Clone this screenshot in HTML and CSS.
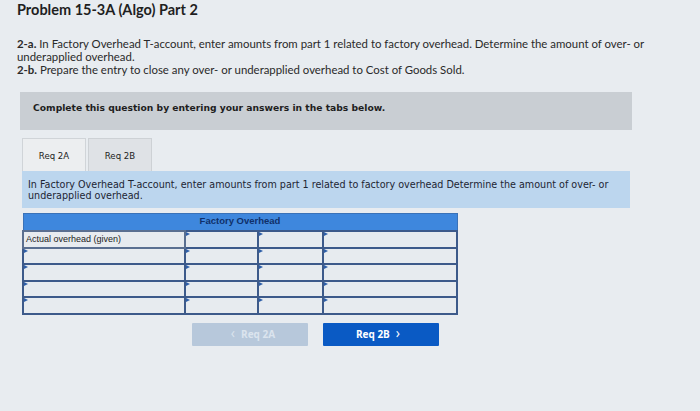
FILE: index.html
```html
<!DOCTYPE html>
<html>
<head>
<meta charset="utf-8">
<link rel="stylesheet" href="styles.css">
</head>
<body>
<div class="page">
  <h1 class="title">Problem 15-3A (Algo) Part 2</h1>
  <div class="intro">
    <p><b>2-a.</b> In Factory Overhead T-account, enter amounts from part 1 related to factory overhead. Determine the amount of over- or underapplied overhead.</p>
    <p><b>2-b.</b> Prepare the entry to close any over- or underapplied overhead to Cost of Goods Sold.</p>
  </div>
  <div class="notice">Complete this question by entering your answers in the tabs below.</div>
  <div class="tabs">
    <div class="tab active">Req 2A</div>
    <div class="tab">Req 2B</div>
  </div>
  <div class="info">In Factory Overhead T-account, enter amounts from part 1 related to factory overhead Determine the amount of over- or underapplied overhead.</div>
  <table class="tacct">
    <thead>
      <tr><th colspan="4">Factory Overhead</th></tr>
    </thead>
    <tbody>
      <tr><td class="c1 lbl">Actual overhead (given)</td><td class="c2 in"></td><td class="c3 in"></td><td class="c4 in"></td></tr>
      <tr><td class="c1 in"></td><td class="c2 in"></td><td class="c3 in"></td><td class="c4 in"></td></tr>
      <tr><td class="c1 in"></td><td class="c2 in"></td><td class="c3 in"></td><td class="c4 in"></td></tr>
      <tr><td class="c1 in"></td><td class="c2 in"></td><td class="c3 in"></td><td class="c4 in"></td></tr>
      <tr><td class="c1 in"></td><td class="c2 in"></td><td class="c3 in"></td><td class="c4 in"></td></tr>
    </tbody>
  </table>
  <div class="nav">
    <div class="btn prev"><span class="chev">&lsaquo;</span> Req 2A</div>
    <div class="btn next">Req 2B <span class="chev">&rsaquo;</span></div>
  </div>
</div>
</body>
</html>
```
FILE: styles.css
```css
html, body {
  margin: 0;
  padding: 0;
  background: #e8ecf0;
}
.page {
  width: 700px;
  height: 411px;
  padding: 0 0 0 17px;
  box-sizing: border-box;
  font-family: "Lato", "Open Sans", sans-serif;
  color: #222;
}
.title {
  margin: 0;
  padding-top: 0;
  font-family: "Lato", sans-serif;
  font-size: 14.5px;
  font-weight: 700;
  line-height: 20px;
  color: #1f1f1f;
}
.intro {
  margin-top: 17px;
  width: 650px;
  font-size: 11.4px;
  line-height: 13px;
  color: #2a2a2a;
}
.intro p { margin: 0; }
.intro b { font-weight: 700; }
.notice {
  margin-top: 16px;
  margin-left: 3px;
  width: 612px;
  height: 38px;
  box-sizing: border-box;
  padding: 10px 0 0 13px;
  background: #c9ced3;
  font-family: "DejaVu Sans", Verdana, sans-serif;
  font-weight: 700;
  font-size: 9.2px;
  color: #1e1e1e;
}
.tabs {
  display: flex;
  margin-top: 8px;
  margin-left: 5px;
  gap: 2px;
}
.tab {
  width: 64px;
  height: 33px;
  box-sizing: border-box;
  border: 1px solid #cdd1d5;
  border-bottom: none;
  background: #dfe2e6;
  font-family: "DejaVu Sans", Verdana, sans-serif;
  font-size: 8.6px;
  color: #222;
  display: flex;
  align-items: center;
  justify-content: center;
  padding-top: 2px;
}
.tab.active {
  background: #eceef0;
  border-color: #d0d4d8;
}
.info {
  margin-left: 5px;
  width: 608px;
  height: 37px;
  box-sizing: border-box;
  padding: 8px 0 0 6px;
  background: #bcd6ee;
  font-family: "DejaVu Sans", Verdana, sans-serif;
  font-size: 9.6px;
  line-height: 11px;
  color: #1c2533;
}
.tacct {
  margin-top: 5px;
  margin-left: 5px;
  width: 436px;
  border-collapse: collapse;
  font-family: "Liberation Sans", Arial, sans-serif;
}
.tacct th {
  height: 16px;
  padding: 0;
  background: #3e87dd;
  border: 1px solid #3a72b8;
  font-size: 9.5px;
  font-weight: 700;
  color: #10306a;
  text-align: center;
  vertical-align: top;
  line-height: 14px;
}
.tacct td {
  height: 14.5px;
  padding: 0;
  border: 2px solid #3d5a8a;
  background: #e7ebef;
  position: relative;
  line-height: 12px;
}
.tacct td.lbl {
  font-size: 9px;
  color: #222;
  padding-left: 2px;
  border-color: #5a6f90;
}
.tacct td.c1 { width: 160px; }
.tacct td.c2 { width: 72px; }
.tacct td.c3 { width: 64px; }
.tacct td.c4 { width: 134px; }
.tacct td.in::before {
  content: "";
  position: absolute;
  left: 0;
  top: 0;
  border-left: 4px solid #2f5fa8;
  border-top: 2px solid transparent;
  border-bottom: 2px solid transparent;
}
.nav {
  display: flex;
  gap: 15px;
  margin-top: 8px;
  margin-left: 175px;
}
.btn {
  width: 116px;
  height: 23px;
  display: flex;
  align-items: center;
  justify-content: center;
  font-family: "Open Sans", "Liberation Sans", sans-serif;
  font-size: 10px;
  font-weight: 700;
  border-radius: 1px;
}
.btn .chev {
  font-size: 14px;
  font-weight: 400;
  margin: 0 6px;
  line-height: 1;
  position: relative;
  top: -1px;
}
.prev {
  background: #b7c8db;
  color: #dbe4ee;
}
.next {
  background: #0a5ac4;
  color: #ffffff;
}
```
